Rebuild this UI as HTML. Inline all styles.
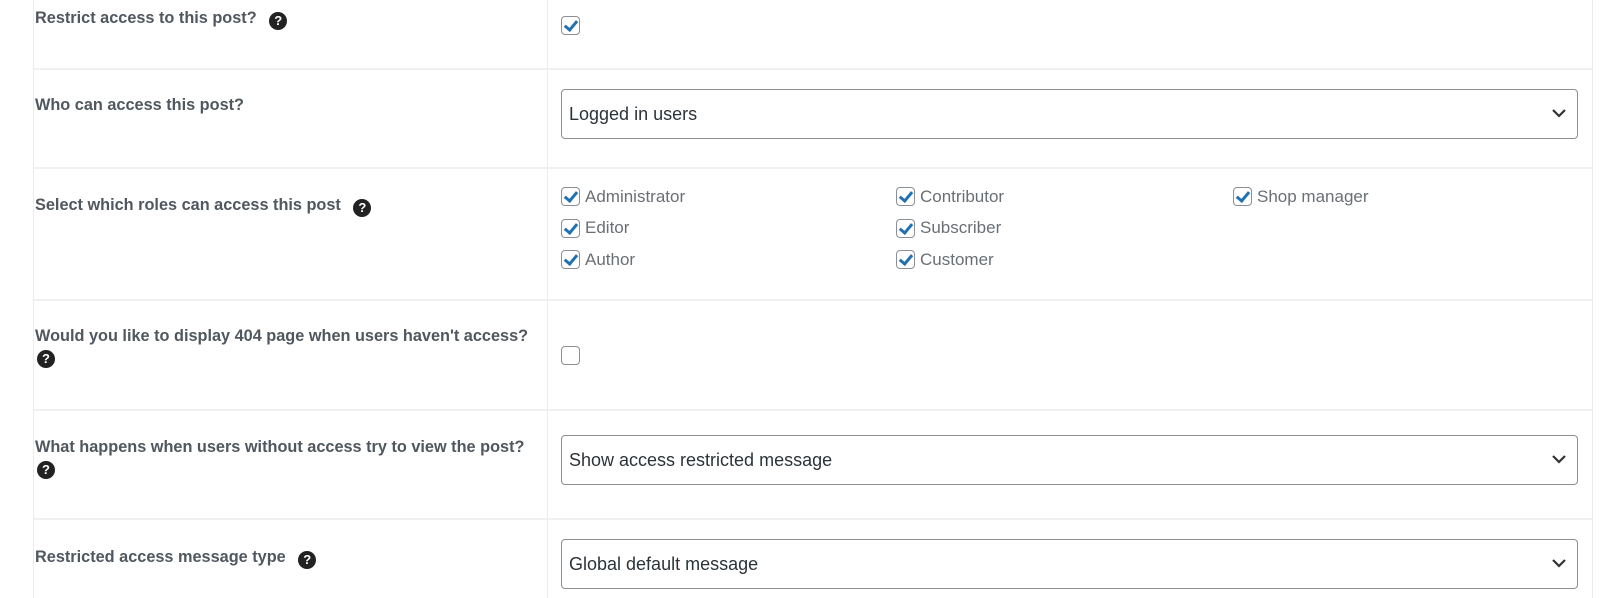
<!DOCTYPE html>
<html><head><style>
body{margin:0;width:1614px;height:598px;background:#fff;overflow:hidden;font-family:"Liberation Sans",sans-serif;position:relative}
.vl{position:absolute;top:0;bottom:0;width:1px;background:#ececec}
.hl{position:absolute;left:34px;width:1558px;height:2px;background:#f0f0f1}
.lab{position:absolute;left:35px;font-size:16.3px;font-weight:bold;color:#50575e;letter-spacing:0;line-height:19px}
.q{display:inline-block;width:18px;height:18px;border-radius:50%;background:#222;color:#fff;font-size:13px;font-weight:bold;text-align:center;line-height:18px;vertical-align:-2px;margin-left:8px}
.cb{position:absolute;width:17px;height:17px;border:1px solid #8c8f94;border-radius:4px;background:#fff}
.cb.on::after{content:"";position:absolute;left:5px;top:1px;width:5px;height:10px;border:solid #2271b1;border-width:0 3px 3px 0;transform:rotate(40deg)}
.rl{position:absolute;font-size:17px;color:#6a6f75;line-height:20px}
.sel{position:absolute;left:561px;width:1015px;height:48px;border:1px solid #8c8f94;border-radius:4px;font-size:18px;color:#2c3338;line-height:48px;text-indent:7px}
.sel svg{position:absolute;right:10px;top:18px}
</style></head><body>
<div class="vl" style="left:33px"></div>
<div class="vl" style="left:547px"></div>
<div class="vl" style="left:1592px"></div>
<div class="hl" style="top:68px"></div>
<div class="hl" style="top:167px"></div>
<div class="hl" style="top:299px"></div>
<div class="hl" style="top:409px"></div>
<div class="hl" style="top:518px"></div>

<div class="lab" style="top:9px">Restrict access to this post? <span class="q">?</span></div>
<div class="cb on" style="left:561px;top:16px"></div>

<div class="lab" style="top:96px">Who can access this post?</div>
<div class="sel" style="top:89px">Logged in users<svg width="16" height="10"><path d="M2 2l6 6 6-6" stroke="#333" stroke-width="2.2" fill="none"/></svg></div>

<div class="lab" style="top:196px">Select which roles can access this post <span class="q">?</span></div>
<div class="cb on" style="left:561px;top:187px"></div><div class="rl" style="left:585px;top:187px">Administrator</div>
<div class="cb on" style="left:561px;top:219px"></div><div class="rl" style="left:585px;top:218px">Editor</div>
<div class="cb on" style="left:561px;top:250px"></div><div class="rl" style="left:585px;top:250px">Author</div>
<div class="cb on" style="left:896px;top:187px"></div><div class="rl" style="left:920px;top:187px">Contributor</div>
<div class="cb on" style="left:896px;top:219px"></div><div class="rl" style="left:920px;top:218px">Subscriber</div>
<div class="cb on" style="left:896px;top:250px"></div><div class="rl" style="left:920px;top:250px">Customer</div>
<div class="cb on" style="left:1233px;top:187px"></div><div class="rl" style="left:1257px;top:187px">Shop manager</div>

<div class="lab" style="top:327px">Would you like to display 404 page when users haven't access?<br><span class="q" style="margin:4px 0 0 2px">?</span></div>
<div class="cb" style="left:561px;top:346px"></div>

<div class="lab" style="top:438px">What happens when users without access try to view the post?<br><span class="q" style="margin:4px 0 0 2px">?</span></div>
<div class="sel" style="top:435px">Show access restricted message<svg width="16" height="10"><path d="M2 2l6 6 6-6" stroke="#333" stroke-width="2.2" fill="none"/></svg></div>

<div class="lab" style="top:548px">Restricted access message type <span class="q">?</span></div>
<div class="sel" style="top:539px">Global default message<svg width="16" height="10"><path d="M2 2l6 6 6-6" stroke="#333" stroke-width="2.2" fill="none"/></svg></div>
</body></html>
